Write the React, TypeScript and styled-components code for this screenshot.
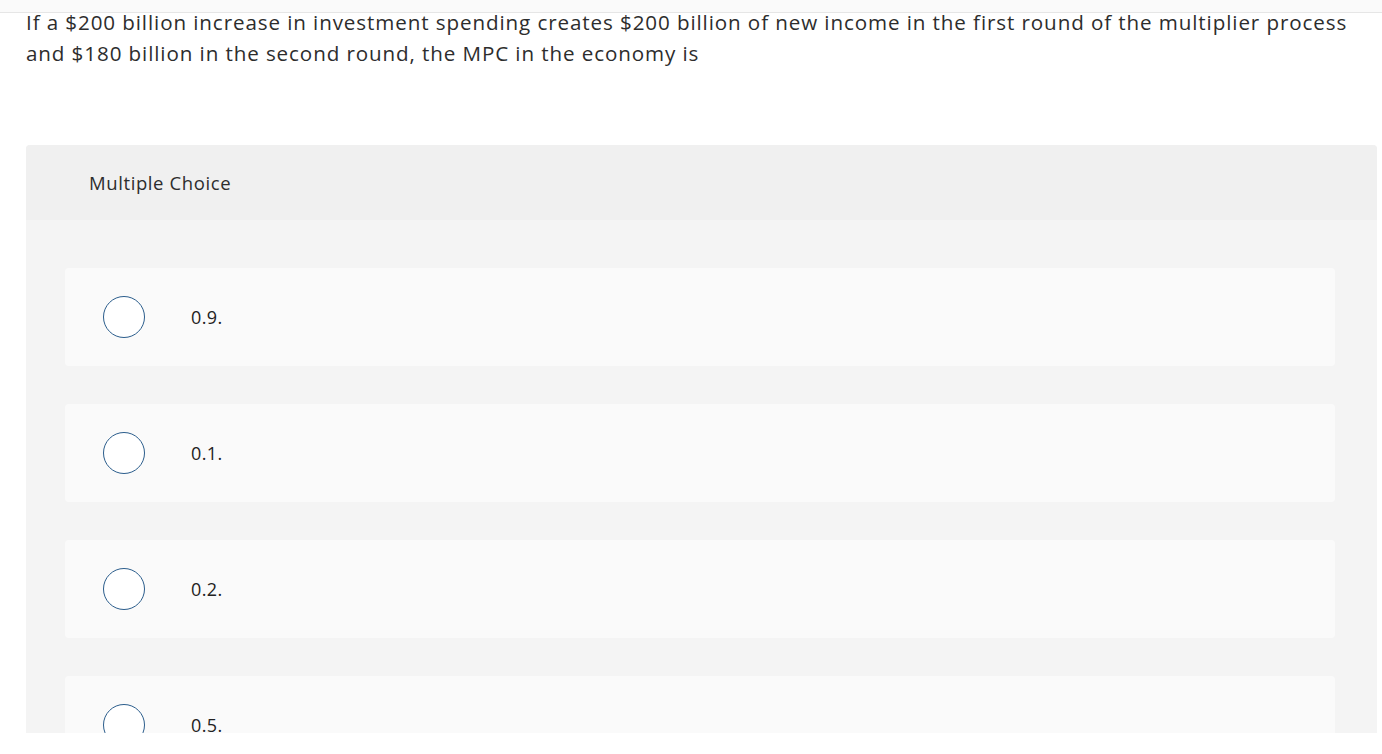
import * as React from 'react'
import styled, { createGlobalStyle } from 'styled-components'

const Global = createGlobalStyle`
  html, body {
    margin: 0;
    padding: 0;
    background: #fff;
  }
  body {
    font-family: "Open Sans", "Liberation Sans", sans-serif;
    color: #333;
  }
`

const Viewport = styled.div`
  height: 733px;
  overflow: hidden;
  background: #fff;
`

const TopStrip = styled.div`
  height: 12px;
  background: #fafafa;
  border-bottom: 1px solid #e6e6e6;
`

const Question = styled.p`
  margin: 0;
  padding: 0 26px;
  font-size: 20.6px;
  letter-spacing: 0.9px;
  line-height: 31px;
  color: #2d2d2d;
  margin-top: -6px;
`

const Panel = styled.section`
  margin: 76px 5px 0 26px;
  border-radius: 4px;
  overflow: hidden;
  background: #f4f4f4;
`

const PanelHeader = styled.header`
  height: 75px;
  display: flex;
  align-items: center;
  padding-left: 63px;
  background: #f0f0f0;
  font-size: 18.5px;
  letter-spacing: 0.6px;
  color: #2d2d2d;
`

const PanelBody = styled.div`
  padding: 48px 42px 48px 39px;
  display: flex;
  flex-direction: column;
  gap: 38px;
`

const OptionCard = styled.label`
  height: 98px;
  display: flex;
  align-items: center;
  background: #fafafa;
  border-radius: 4px;
  padding-left: 38px;
  cursor: pointer;
`

const Radio = styled.span`
  width: 40px;
  height: 40px;
  border-radius: 50%;
  border: 1px solid #2b5d8c;
  background: #fff;
  flex: none;
`

const OptionText = styled.span`
  margin-left: 46px;
  font-size: 18px;
  letter-spacing: 0.4px;
  color: #222;
`

const options = ['0.9.', '0.1.', '0.2.', '0.5.']

export default function App() {
  return (
    <Viewport>
      <Global />
      <TopStrip />
      <Question>
        If a $200 billion increase in investment spending creates $200 billion of new income in the first round of the
        multiplier process and $180 billion in the second round, the MPC in the economy is
      </Question>
      <Panel>
        <PanelHeader>Multiple Choice</PanelHeader>
        <PanelBody>
          {options.map((o) => (
            <OptionCard key={o}>
              <Radio />
              <OptionText>{o}</OptionText>
            </OptionCard>
          ))}
        </PanelBody>
      </Panel>
    </Viewport>
  )
}
